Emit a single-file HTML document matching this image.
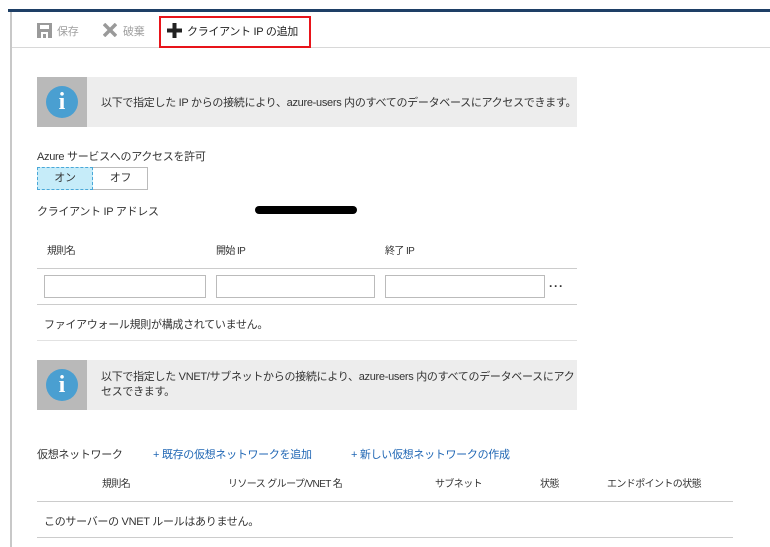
<!DOCTYPE html>
<html><head><meta charset="utf-8"><style>
*{margin:0;padding:0;box-sizing:border-box}
body{width:770px;height:547px;background:#fff;position:relative;overflow:hidden;font-family:"Liberation Sans","Noto Sans CJK JP",sans-serif;font-size:11px;letter-spacing:-0.3px;color:#333}
.a{position:absolute;white-space:nowrap}
.ln{position:absolute;height:1px;background:#ccc}
.info{position:absolute;left:37px;width:540px;background:#ededed}
.info .ic{position:absolute;left:0;top:0;bottom:0;width:50px;background:#b9b9b9}
.info .c{position:absolute;left:9px;width:32px;height:32px;border-radius:50%;background:#4a9fd1;color:#fff;font:bold 24px "Liberation Serif",serif;text-align:center;line-height:32px;letter-spacing:0}
.inp{position:absolute;top:275px;height:23px;border:1px solid #bbb;background:#fff}
.h{font-size:10px;letter-spacing:-0.6px;color:#333}
.lk{color:#1f66b4}
</style></head><body>
<div class="a" style="left:8px;top:9px;width:762px;height:3px;background:#1e3f66"></div>
<div class="a" style="left:10px;top:12px;width:2px;height:535px;background:#c8c8c8"></div>
<div class="ln" style="left:12px;top:47px;width:758px;background:#d8d8d8"></div>
<svg class="a" style="left:37px;top:23px" width="15" height="15" viewBox="0 0 15 15"><path d="M0 0H15V15H0Z M3 2V6H12V2Z M4 9V15H6V11H9V15H11V9Z" fill="#9a9a9a" fill-rule="evenodd"/></svg>
<div class="a" style="left:57px;top:23px;color:#a0a0a0">保存</div>
<svg class="a" style="left:103px;top:23px" width="14" height="14" viewBox="0 0 14 14"><path d="M1 1L13 13M13 1L1 13" stroke="#9a9a9a" stroke-width="3.5"/></svg>
<div class="a" style="left:123px;top:23px;color:#a0a0a0">破棄</div>
<div class="a" style="left:159px;top:16px;width:152px;height:32px;border:2px solid #e8141a"></div>
<svg class="a" style="left:167px;top:23px" width="15" height="15" viewBox="0 0 15 15"><path d="M7.5 0V15M0 7.5H15" stroke="#222" stroke-width="4"/></svg>
<div class="a" style="left:187px;top:23px;color:#222">クライアント IP の追加</div>

<div class="info" style="top:77px;height:50px"><div class="ic"><div class="c" style="top:9px">i</div></div>
<div class="a" style="left:64px;top:17px">以下で指定した IP からの接続により、azure-users 内のすべてのデータベースにアクセスできます。</div></div>

<div class="a" style="left:37px;top:148px">Azure サービスへのアクセスを許可</div>
<div class="a" style="left:37px;top:167px;width:111px;height:23px;border:1px solid #bbb"></div>
<div class="a" style="left:37px;top:167px;width:56px;height:23px;background:#c6ecf9;border:1px dashed #4aa8d8;text-align:center;line-height:21px">オン</div>
<div class="a" style="left:93px;top:167px;width:55px;height:23px;text-align:center;line-height:23px">オフ</div>
<div class="a" style="left:37px;top:203px">クライアント IP アドレス</div>
<div class="a" style="left:255px;top:206px;width:102px;height:8px;border-radius:4px;background:#000"></div>

<div class="a h" style="left:47px;top:242px">規則名</div>
<div class="a h" style="left:216px;top:242px">開始 IP</div>
<div class="a h" style="left:385px;top:242px">終了 IP</div>
<div class="ln" style="left:37px;top:268px;width:540px"></div>
<div class="inp" style="left:44px;width:162px"></div>
<div class="inp" style="left:216px;width:159px"></div>
<div class="inp" style="left:385px;width:160px"></div>
<div class="a" style="left:549px;top:279px;font-weight:bold;letter-spacing:1px;font-size:12px">···</div>
<div class="ln" style="left:37px;top:304px;width:540px"></div>
<div class="a" style="left:44px;top:316px">ファイアウォール規則が構成されていません。</div>
<div class="ln" style="left:37px;top:340px;width:540px;background:#e2e2e2"></div>

<div class="info" style="top:360px;height:50px"><div class="ic"><div class="c" style="top:9px">i</div></div>
<div class="a" style="left:64px;top:10px;line-height:15px">以下で指定した VNET/サブネットからの接続により、azure-users 内のすべてのデータベースにアク<br>セスできます。</div></div>

<div class="a" style="left:37px;top:446px">仮想ネットワーク</div>
<div class="a lk" style="left:153px;top:446px">+ 既存の仮想ネットワークを追加</div>
<div class="a lk" style="left:351px;top:446px">+ 新しい仮想ネットワークの作成</div>
<div class="a h" style="left:102px;top:475px">規則名</div>
<div class="a h" style="left:228px;top:475px">リソース グループ/VNET 名</div>
<div class="a h" style="left:435px;top:475px">サブネット</div>
<div class="a h" style="left:540px;top:475px">状態</div>
<div class="a h" style="left:607px;top:475px">エンドポイントの状態</div>
<div class="ln" style="left:37px;top:501px;width:696px"></div>
<div class="a" style="left:44px;top:513px">このサーバーの VNET ルールはありません。</div>
<div class="ln" style="left:37px;top:537px;width:696px"></div>
</body></html>
